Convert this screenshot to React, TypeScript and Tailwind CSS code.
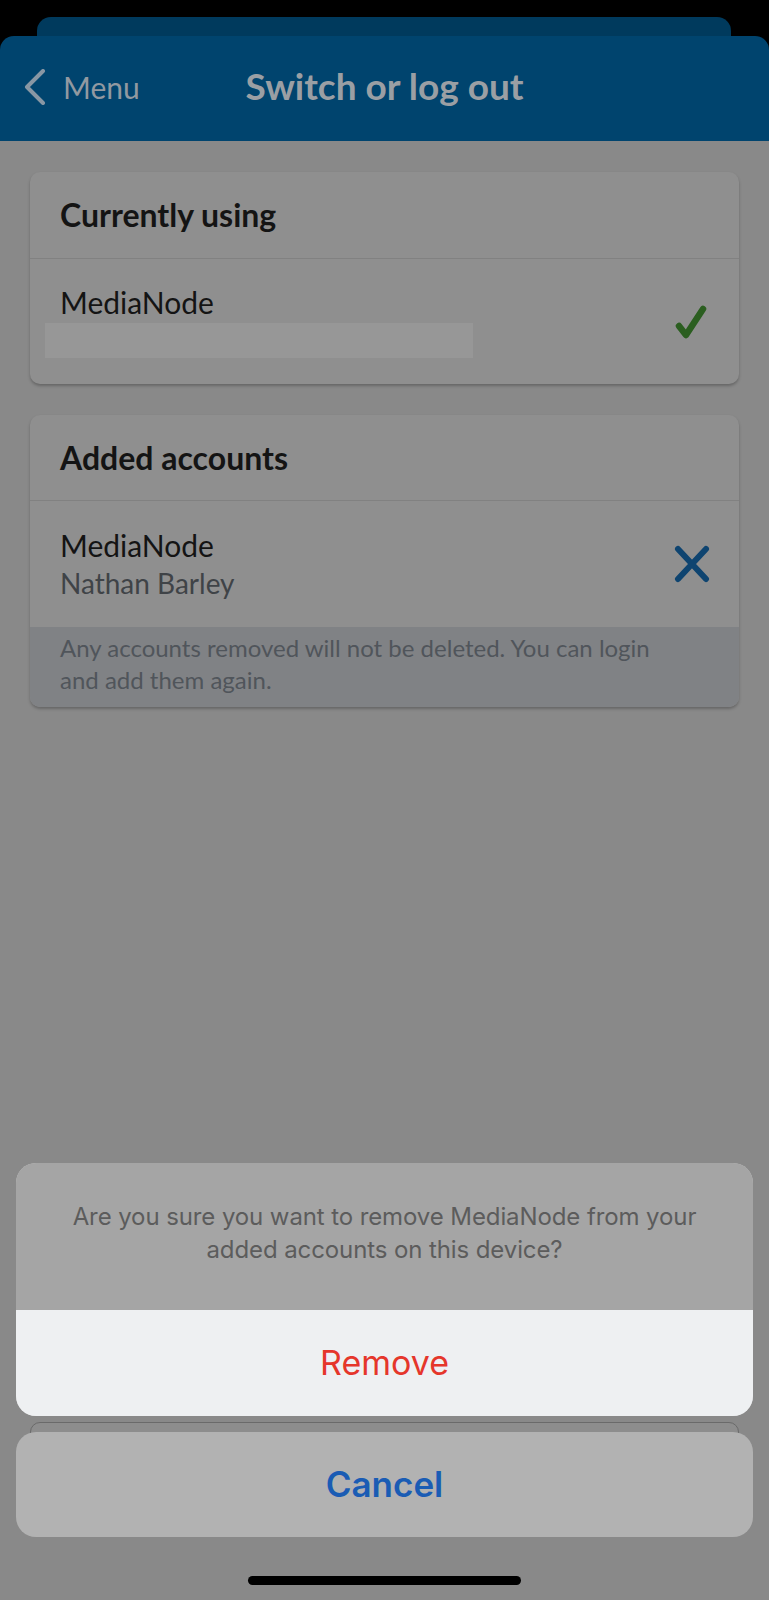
import React from "react";

const app = "font-['Lato','Noto_Sans',sans-serif]";
const ios = "font-['Inter','Liberation_Sans',sans-serif]";

function Check() {
  return (
    <svg width="32" height="34" viewBox="0 0 32 34" fill="none">
      <path d="M4 21 L11 30 L28 4" stroke="#2b5e20" strokeWidth="6.5" strokeLinecap="round" strokeLinejoin="round" />
    </svg>
  );
}

function Cross() {
  return (
    <svg width="36" height="38" viewBox="0 0 36 38" fill="none">
      <path d="M4 4 L32 34 M32 4 L4 34" stroke="#0e4470" strokeWidth="6" strokeLinecap="round" />
    </svg>
  );
}

export default function App() {
  return (
    <div className={`relative w-[769px] h-[1600px] overflow-hidden bg-black ${app}`}>
      {/* top tabs */}
      <div className="pt-[17px]">
        <div className="mx-[37px] w-[694px] h-[21px] rounded-t-[14px] bg-[#003a5d]" />
        <div className="-mt-[2px] h-[105px] rounded-t-[14px] bg-[#00446e] relative flex items-center">
          <div className="absolute left-[24px] top-[33px] flex items-center gap-[17px]">
            <svg width="22" height="36" viewBox="0 0 22 36" fill="none">
              <path d="M19 2 L3 18 L19 34" stroke="#8897a4" strokeWidth="4" strokeLinecap="round" strokeLinejoin="round" />
            </svg>
            <span className="text-[30px] leading-none text-[#9199a1]">Menu</span>
          </div>
          <div className="w-full text-center text-[37px] font-bold leading-none text-[#9a9fa4] pb-[6px]">
            Switch or log out
          </div>
        </div>
      </div>

      {/* page content */}
      <div className="bg-[#898989] h-[1461px] pt-[31px] px-[30px]">
        <div className="rounded-[10px] bg-[#8f8f8f] shadow-[0_2px_3px_rgba(0,0,0,0.25)] overflow-hidden">
          <div className="h-[87px] flex items-center px-[30px] border-b border-[#818181]">
            <span className="text-[32px] font-bold leading-none text-[#141414]">Currently using</span>
          </div>
          <div className="h-[125px] relative flex items-center justify-between pl-[30px] pr-[32px]">
            <div className="flex flex-col self-stretch pt-[28px]">
              <span className="text-[30px] leading-none text-[#141414]">MediaNode</span>
              <div className="-ml-[15px] mt-[6px] w-[428px] h-[35px] bg-[#979797]" />
            </div>
            <Check />
          </div>
        </div>

        <div className="mt-[31px] rounded-[10px] bg-[#8f8f8f] shadow-[0_2px_3px_rgba(0,0,0,0.25)] overflow-hidden">
          <div className="h-[86px] flex items-center px-[30px] border-b border-[#818181]">
            <span className="text-[32px] font-bold leading-none text-[#141414]">Added accounts</span>
          </div>
          <div className="h-[126px] flex items-center justify-between pl-[30px] pr-[29px]">
            <div className="flex flex-col gap-[9px] -mt-[2px]">
              <span className="text-[30px] leading-none text-[#141414]">MediaNode</span>
              <span className="text-[28px] leading-none text-[#3f4347]">Nathan Barley</span>
            </div>
            <Cross />
          </div>
          <div className="h-[80px] bg-[#808285] px-[30px] pt-[5px]">
            <p className="max-w-[625px] text-[24px] leading-[32px] text-[#50555b]">
              Any accounts removed will not be deleted. You can login and add them again.
            </p>
          </div>
        </div>

        <div className="mt-[715px] h-[80px] rounded-[10px] border border-[#6a6a6a] bg-[#8d8d8d]" />
      </div>

      {/* action sheet overlay */}
      <div className={`absolute left-[16px] right-[16px] top-[1163px] ${ios}`}>
        <div className="rounded-[20px] overflow-hidden bg-[#c4c4c4]">
          <div className="h-[147px] bg-[#a5a5a5] flex items-start justify-center pt-[37px] px-[40px]">
            <p className="text-center text-[24px] leading-[33px] text-[#5c5c5c] tracking-[-0.1px]">
              Are you sure you want to remove MediaNode from your added accounts on this device?
            </p>
          </div>
          <div className="h-[106px] bg-[#eef0f2] rounded-b-[16px] flex items-center justify-center">
            <span className="text-[34px] leading-none text-[#e5362b]">Remove</span>
          </div>
        </div>
      </div>

      <div className={`absolute left-[16px] right-[16px] top-[1432px] h-[105px] rounded-[20px] bg-[#b2b2b2] flex items-center justify-center ${ios}`}>
        <span className="text-[35px] font-semibold leading-none text-[#1a5cb4]">Cancel</span>
      </div>

      <div className="absolute left-[248px] top-[1576px] w-[273px] h-[9px] rounded-full bg-black" />
    </div>
  );
}
